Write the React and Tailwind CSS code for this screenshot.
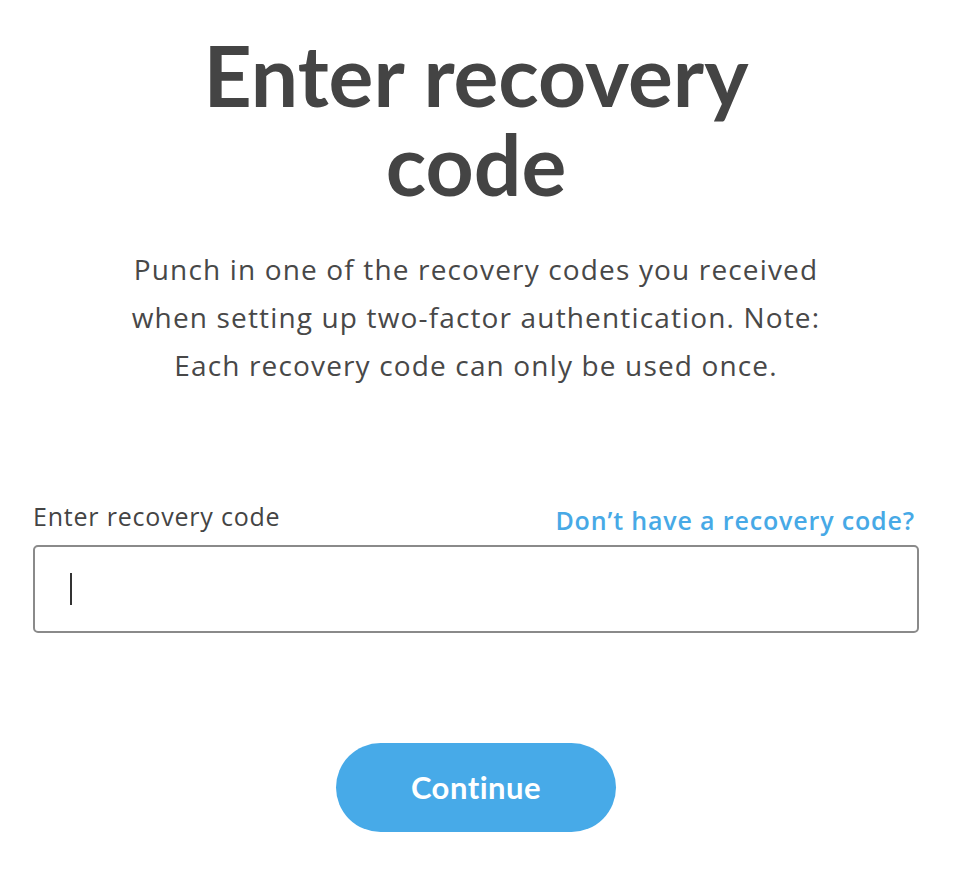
export default function App() {
  return (
    <div
      className="min-h-[888px] bg-white text-[#444444]"
      style={{ fontFamily: "'Open Sans', Lato, sans-serif" }}
    >
      <div className="ml-[33px] w-[886px] flex flex-col items-center pt-[30px]">
        <h1
          className="text-[84px] font-bold leading-[89px] text-center text-[#444444] w-[620px]"
          style={{ fontFamily: "Lato, sans-serif" }}
        >
          Enter recovery code
        </h1>
        <p className="mt-[37px] text-[28px] leading-[48px] tracking-[1.15px] text-center text-[#484848] whitespace-nowrap">
          Punch in one of the recovery codes you received
          <br />
          when setting up two-factor authentication. Note:
          <br />
          Each recovery code can only be used once.
        </p>

        <div className="w-full mt-[112px]">
          <div className="flex items-end justify-between">
            <label className="text-[25px] leading-[30px] tracking-[0.8px] text-[#444444]">Enter recovery code</label>
            <a href="#" className="text-[25px] leading-[30px] tracking-[0.85px] font-semibold text-[#47a9e6] translate-y-[4px] mr-[4px]">
              Don’t have a recovery code?
            </a>
          </div>
          <div className="mt-[14px] h-[88px] border-2 border-[#8a8a8a] rounded-[5px] flex items-center pl-[35px]">
            <span className="block w-[2px] h-[32px] bg-[#333333]" />
          </div>
        </div>

        <button
          className="mt-[110px] w-[280px] h-[89px] rounded-full bg-[#47aae8] text-white text-[31px] font-bold tracking-[0.5px]"
          style={{ fontFamily: "Lato, sans-serif" }}
        >
          Continue
        </button>
      </div>
    </div>
  );
}
